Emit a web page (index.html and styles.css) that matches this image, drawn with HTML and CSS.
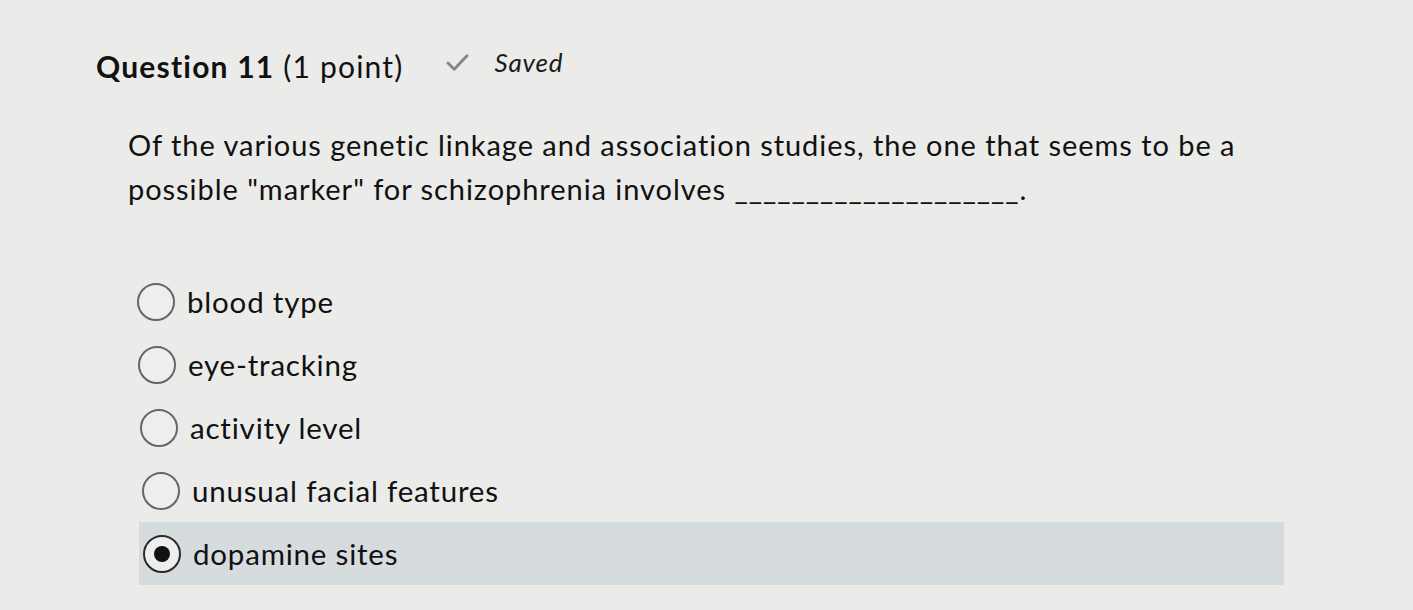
FILE: index.html
```html
<!DOCTYPE html>
<html lang="en">
<head>
<meta charset="utf-8">
<title>Question 11</title>
<link rel="stylesheet" href="styles.css">
</head>
<body>
<main class="question">
  <header class="q-header">
    <h2 class="q-title"><strong>Question 11</strong> <span class="q-points">(1 point)</span></h2>
    <span class="q-status">
      <svg class="check" viewBox="0 0 24 20" width="23" height="19" aria-hidden="true"><path d="M2 10.5 L8.5 17 L22 3" fill="none" stroke="#858585" stroke-width="3" stroke-linecap="round" stroke-linejoin="round"/></svg>
      <em>Saved</em>
    </span>
  </header>
  <p class="q-text">Of the various genetic linkage and association studies, the one that seems to be a possible "marker" for schizophrenia involves ____________________.</p>
  <ul class="options">
    <li class="option"><span class="radio"></span><span class="label">blood type</span></li>
    <li class="option"><span class="radio"></span><span class="label">eye-tracking</span></li>
    <li class="option"><span class="radio"></span><span class="label">activity level</span></li>
    <li class="option"><span class="radio"></span><span class="label">unusual facial features</span></li>
    <li class="option selected"><span class="radio"><span class="dot"></span></span><span class="label">dopamine sites</span></li>
  </ul>
</main>
</body>
</html>
```
FILE: styles.css
```css
html, body {
  margin: 0;
  padding: 0;
  background: #ebebe9;
  color: #111111;
  font-family: Lato, "Open Sans", sans-serif;
  font-variant-ligatures: none;
}
.question {
  padding: 46px 0 0 96px;
  width: 1190px;
}
.q-header {
  display: flex;
  align-items: center;
  gap: 42px;
  height: 40px;
}
.q-title {
  margin: 0;
  font-size: 30px;
  font-weight: 400;
  line-height: 40px;
  letter-spacing: 1.2px;
}
.q-title strong {
  font-weight: 700;
}
.q-status {
  display: flex;
  align-items: center;
  gap: 26px;
  font-size: 26px;
  letter-spacing: 0.8px;
  color: #1a1a1a;
  margin-top: -8px;
}
.q-status em {
  font-style: italic;
}
.q-text {
  margin: 37px 0 0 32px;
  font-size: 29px;
  line-height: 44px;
  letter-spacing: 0.95px;
  width: 1140px;
}
.options {
  list-style: none;
  margin: 59px 0 0 0;
  padding: 0;
  width: 1190px;
}
.option {
  display: flex;
  align-items: center;
  gap: 12px;
  height: 63px;
  margin-left: 43px;
  font-size: 29.5px;
  letter-spacing: 0.8px;
}
.option:nth-child(1) { margin-left: 41px; }
.option:nth-child(2) { margin-left: 42px; }
.option:nth-child(3) { margin-left: 44px; }
.option:nth-child(4) { margin-left: 46px; }
.option.selected {
  margin-left: 43px;
  padding-left: 4px;
  width: 1141px;
  background: #d6dbde;
}
.radio {
  box-sizing: border-box;
  width: 38px;
  height: 38px;
  border: 2px solid #666666;
  border-radius: 50%;
  background: #eeeeec;
  display: flex;
  align-items: center;
  justify-content: center;
  flex: none;
}
.selected .radio {
  border: 2.5px solid #2a2a2a;
}
.dot {
  width: 16px;
  height: 16px;
  border-radius: 50%;
  background: #111;
}
.label {
  line-height: 40px;
}
```
